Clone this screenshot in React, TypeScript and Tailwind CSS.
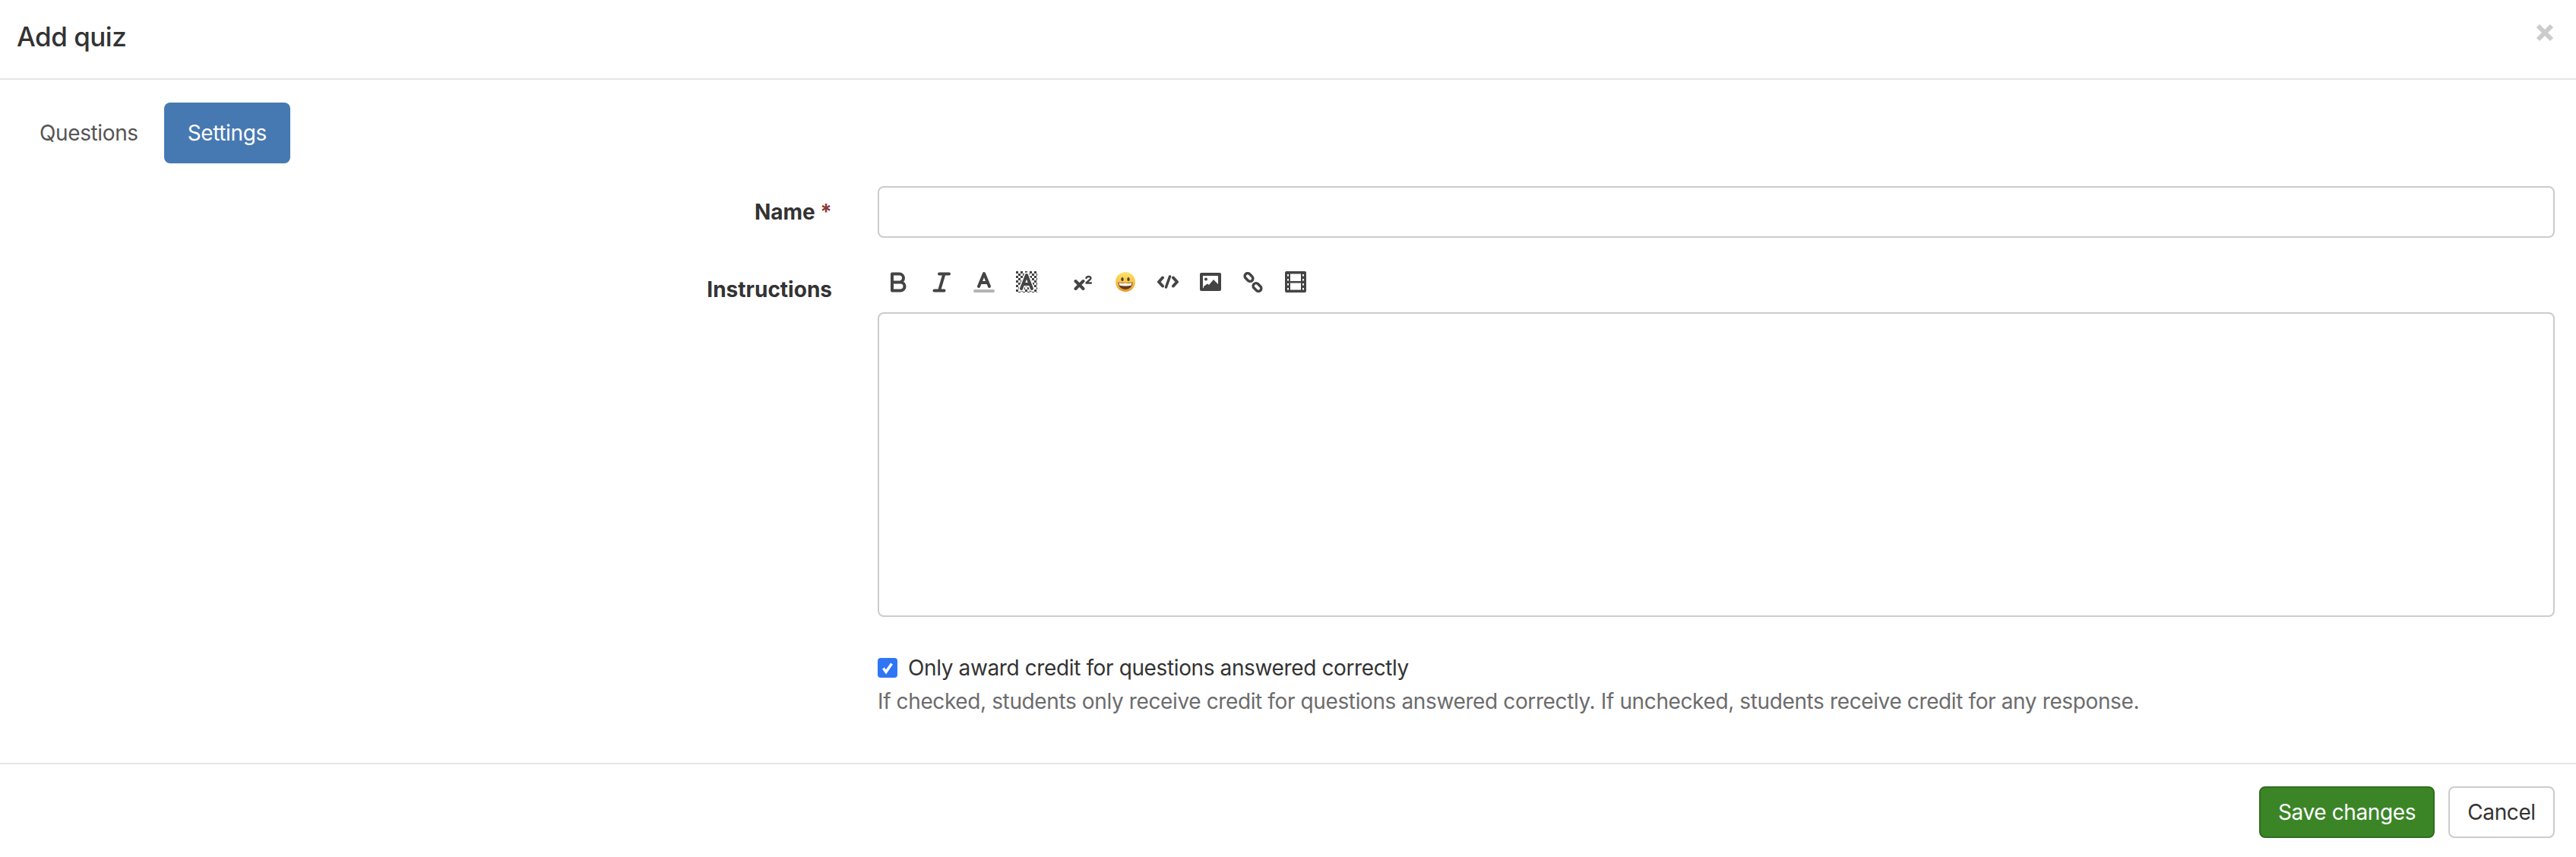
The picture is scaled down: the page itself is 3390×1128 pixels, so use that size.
import React from "react";

const Ic = ({ w, h, vb, children, cls = "" }: { w: number; h: number; vb?: string; children: React.ReactNode; cls?: string }) => (
  <svg width={w} height={h} viewBox={vb ?? `0 0 ${w} ${h}`} fill="none" className={cls}>{children}</svg>
);
const C = "#444444";

const BoldI = () => (
  <Ic w={28} h={28}>
    <path d="M5 3.500h9.500a5.500 5.500 0 0 1 0 11H5zM5 14.500h11a5.500 5.500 0 0 1 0 11H5z" stroke={C} strokeWidth="4" strokeLinejoin="round" />
  </Ic>
);
const ItalicI = () => (
  <Ic w={28} h={28}>
    <path d="M11 3.500h13M4.500 25.500h13M17.500 3.500l-6.500 22" stroke={C} strokeWidth="4" strokeLinecap="round" />
  </Ic>
);
const ColorI = () => (
  <Ic w={28} h={28}>
    <path d="M7 20L14 3l7 17M9.500 15h9" stroke={C} strokeWidth="4" strokeLinecap="round" strokeLinejoin="round" />
    <rect x="0" y="24" width="28" height="4" rx="2" fill="#b4b4b4" />
  </Ic>
);
const BgI = () => (
  <Ic w={28} h={28}>
    <defs>
      <pattern id="hatch" width="6" height="6" patternUnits="userSpaceOnUse">
        <rect width="3" height="3" fill={C} shapeRendering="crispEdges" />
        <rect x="3" y="3" width="3" height="3" fill={C} shapeRendering="crispEdges" />
      </pattern>
    </defs>
    <rect width="28" height="28" fill="url(#hatch)" />
    <path d="M7 23L14 5l7 18M9.500 17h9" stroke="#fff" strokeWidth="7" strokeLinecap="round" strokeLinejoin="round" />
    <path d="M7 23L14 5l7 18M9.500 17h9" stroke={C} strokeWidth="4" strokeLinecap="round" strokeLinejoin="round" />
  </Ic>
);
const SupI = () => (
  <Ic w={24} h={22}>
    <path d="M2.500 10l10 10M12.500 10l-10 10" stroke={C} strokeWidth="4" strokeLinecap="round" />
    <path d="M16.500 6c.5-2.500 6-3 6 .3 0 2.200-5 3.700-6 6.200h6.500" stroke={C} strokeWidth="2.400" strokeLinecap="round" strokeLinejoin="round" />
  </Ic>
);
const Emoji = () => (
  <Ic w={26} h={26}>
    <defs>
      <linearGradient id="face" x1="0" y1="0" x2="0" y2="1">
        <stop offset="0" stopColor="#fbe36f" />
        <stop offset="0.6" stopColor="#f7c042" />
        <stop offset="1" stopColor="#e8952d" />
      </linearGradient>
    </defs>
    <circle cx="13" cy="13" r="13" fill="url(#face)" />
    <ellipse cx="9" cy="9.500" rx="1.700" ry="2.500" fill="#5b3a1a" />
    <ellipse cx="17" cy="9.500" rx="1.700" ry="2.500" fill="#5b3a1a" />
    <path d="M3.500 13.500c6 1.500 13 1.500 19 0 0 6-4.500 9.500-9.500 9.500s-9.500-3.500-9.500-9.500z" fill="#6b3b1c" />
    <path d="M4.500 14.200c5.500 1.200 11.500 1.200 17 0-.1 1.500-.4 2.600-.9 3.500-5 1-10.200 1-15.200 0-.5-.9-.8-2-.9-3.500z" fill="#ffffff" />
  </Ic>
);
const CodeI = () => (
  <Ic w={28} h={18}>
    <path d="M7 3.500L2 9l5 5.500M21 3.500L26 9l-5 5.500" stroke={C} strokeWidth="4" strokeLinecap="round" strokeLinejoin="round" />
    <path d="M16.500 2l-5 14" stroke={C} strokeWidth="3.500" strokeLinecap="round" />
  </Ic>
);
const ImageI = () => (
  <Ic w={28} h={24}>
    <rect width="28" height="24" rx="2" fill={C} />
    <rect x="4" y="4" width="20" height="16" fill="#fff" />
    <circle cx="8" cy="8.500" r="2" fill={C} />
    <path d="M5 20v-2l5-3.500 2 1.500 6-7 6 6v5z" fill={C} />
  </Ic>
);
const LinkI = () => (
  <Ic w={26} h={27}>
    <g stroke={C} strokeWidth="3.500" fill="none">
      <rect x="1.500" y="3.250" width="12" height="7.500" rx="3.750" transform="rotate(45 7.500 7)" />
      <rect x="12.500" y="16.250" width="12" height="7.500" rx="3.750" transform="rotate(45 18.500 20)" />
    </g>
  </Ic>
);
const FilmI = () => (
  <Ic w={28} h={28}>
    <rect width="28" height="28" rx="2" fill={C} />
    <rect x="7" y="3.500" width="14" height="9.500" fill="#fff" />
    <rect x="7" y="15.500" width="14" height="9" fill="#fff" />
    {[4, 10, 16, 22].map((y) => (
      <React.Fragment key={y}>
        <rect x="3" y={y} width="2" height="2.500" fill="#fff" />
        <rect x="23" y={y} width="2" height="2.500" fill="#fff" />
      </React.Fragment>
    ))}
  </Ic>
);

const Tool = ({ children }: { children: React.ReactNode }) => (
  <span className="flex h-[28px] w-[56px] items-center justify-center">{children}</span>
);

export default function App() {
  return (
    <div className="flex h-[1128px] w-[3390px] flex-col bg-white text-[#333333] [font-family:Inter,'Liberation_Sans',sans-serif]">
      <header className="relative flex h-[105px] items-center border-b-2 border-[#e5e5e5] pb-[8px] pl-[22px]">
        <h1 className="text-[35px] leading-[48px] font-medium tracking-[-0.5px]">Add quiz</h1>
        <svg width="24" height="24" viewBox="0 0 24 24" className="absolute top-[31px] right-[29px]">
          <path d="M3 3l18 18M21 3L3 21" stroke="#cccccc" strokeWidth="6" />
        </svg>
      </header>

      <main className="flex flex-1 flex-col">
        <nav className="mt-[30px] flex h-[80px] gap-[4px] pl-[22px] text-[28px] leading-[40px] tracking-[-0.38px]">
          <a className="flex items-center rounded-[8px] px-[30px] text-[#555555]">Questions</a>
          <a className="flex items-center rounded-[8px] bg-[#4679b2] px-[31px] text-white">Settings</a>
        </nav>

        <div className="mt-[30px] flex items-center gap-[60px] pr-[28px]">
          <label className="w-[1095px] text-right text-[28px] leading-[40px] font-bold">
            Name <span className="text-[#8b3a3a]">*</span>
          </label>
          <div className="h-[68px] flex-1 rounded-[8px] border-2 border-[#cccccc]" />
        </div>

        <div className="mt-[44px] flex gap-[60px] pr-[28px]">
          <label className="mt-[4px] w-[1095px] text-right text-[28px] leading-[40px] font-bold">Instructions</label>
          <div className="flex-1">
            <div className="flex h-[28px] items-center">
              <div className="flex">
                <Tool><BoldI /></Tool>
                <Tool><ItalicI /></Tool>
                <Tool><ColorI /></Tool>
                <Tool><BgI /></Tool>
              </div>
              <div className="ml-[18px] flex">
                <Tool><SupI /></Tool>
                <Tool><Emoji /></Tool>
                <Tool><CodeI /></Tool>
                <Tool><ImageI /></Tool>
                <Tool><LinkI /></Tool>
                <Tool><FilmI /></Tool>
              </div>
            </div>
            <div className="mt-[26px] h-[401px] rounded-[8px] border-2 border-[#cccccc]" />
          </div>
        </div>

        <div className="mt-[47px] pl-[1155px] tracking-[-0.38px]">
          <label className="flex items-center gap-[14px] text-[28px] leading-[40px]">
            <span className="flex h-[26px] w-[26px] items-center justify-center rounded-[4px] bg-[#2f76f6]">
              <svg width="18" height="18" viewBox="0 0 18 18">
                <path d="M3.500 9.500l3.500 5 7.500-11" stroke="#fff" strokeWidth="3.500" fill="none" />
              </svg>
            </span>
            Only award credit for questions answered correctly
          </label>
          <p className="mt-[4px] text-[28px] leading-[40px] text-[#6c6c6c]">
            If checked, students only receive credit for questions answered correctly. If unchecked, students receive credit for any response.
          </p>
        </div>
      </main>

      <footer className="flex h-[124px] items-start justify-end gap-[18px] border-t-2 border-[#e5e5e5] pt-[29px] pr-[28px] text-[28px] leading-[40px] tracking-[-0.38px]">
        <button className="h-[68px] w-[231px] rounded-[8px] border-2 border-[#2f6d1e] bg-[#3c8527] text-white">Save changes</button>
        <button className="h-[68px] w-[140px] rounded-[8px] border-2 border-[#cccccc] bg-white">Cancel</button>
      </footer>
    </div>
  );
}
